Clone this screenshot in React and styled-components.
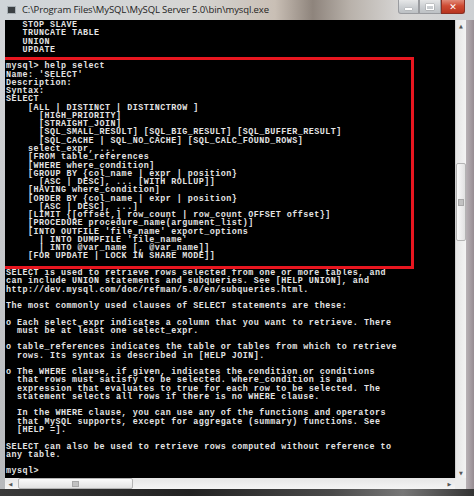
import React from "react";
import styled, { createGlobalStyle } from "styled-components";

const GlobalStyle = createGlobalStyle`
  html, body {
    margin: 0;
    padding: 0;
    background: #2a2a2a;
  }
`;

const Window = styled.div`
  width: 474px;
  height: 496px;
  display: flex;
  flex-direction: column;
  overflow: hidden;
  background: linear-gradient(90deg, #cfd4d9 0%, #d6d6d4 40%, #c9bfb5 58%, #8e847c 66%, #b9b2ab 74%, #d8d7d6 85%, #cdd0d3 100%);
`;

const TitleBar = styled.div`
  height: 20px;
  flex: none;
  display: flex;
  align-items: flex-start;
  padding-left: 7px;
`;

const AppIcon = styled.div`
  width: 9px;
  height: 8px;
  margin-top: 6px;
  margin-right: 6px;
  background: #3c4044;
  border: 1px solid #a9b0b6;
  box-sizing: border-box;
`;

const Title = styled.div`
  font-family: "Open Sans", "Liberation Sans", sans-serif;
  font-size: 9.5px;
  line-height: 20px;
  color: #1e1e1e;
  letter-spacing: -0.12px;
  white-space: nowrap;
`;

const Controls = styled.div`
  margin-left: auto;
  margin-right: 9px;
  display: flex;
  height: 14px;
`;

const CtrlButton = styled.div`
  width: ${(p) => p.$w}px;
  height: 14px;
  box-sizing: border-box;
  border: 1px solid ${(p) => (p.$close ? "#8a3024" : "#9a9ca0")};
  border-top: none;
  border-radius: ${(p) => p.$radius || "0"};
  background: ${(p) =>
    p.$close
      ? "linear-gradient(180deg, #e08a78 0%, #cf4b33 45%, #b7341f 100%)"
      : "linear-gradient(180deg, #e6e7e8 0%, #cdd0d3 50%, #bcc0c4 100%)"};
  display: flex;
  align-items: center;
  justify-content: center;
  color: #fff;
  font-family: "DejaVu Sans", sans-serif;
  font-weight: bold;
  font-size: 9px;
`;

const MinGlyph = styled.div`
  width: 7px;
  height: 2px;
  margin-top: 5px;
  background: #fff;
  box-shadow: 0 0 1px #555;
`;

const MaxGlyph = styled.div`
  width: 8px;
  height: 6px;
  box-sizing: border-box;
  border: 1px solid #fff;
  border-top-width: 2px;
  box-shadow: 0 0 1px #555;
`;

const Body = styled.div`
  height: 469px;
  flex: none;
  display: flex;
`;

const LeftFrame = styled.div`
  width: 5px;
  flex: none;
  background: linear-gradient(180deg, #d4d6d9, #b7b9bc);
`;

const RightFrame = styled.div`
  width: 8px;
  flex: none;
  background: linear-gradient(90deg, #b8b2b6, #978c92);
`;

const ConsoleColumn = styled.div`
  width: 461px;
  flex: none;
  display: flex;
  flex-direction: column;
`;

const ConsoleRow = styled.div`
  height: 458px;
  flex: none;
  display: flex;
`;

const Console = styled.div`
  width: 450px;
  flex: none;
  background: #000;
  padding: 1px 0 0 1px;
  box-sizing: border-box;
  overflow: hidden;
`;

const Line = styled.div`
  font-family: "Liberation Mono", "DejaVu Sans Mono", monospace;
  font-weight: bold;
  font-size: 8.4px;
  letter-spacing: 0.48px;
  line-height: 8.28px;
  height: 8.28px;
  color: #e4e4e4;
  white-space: pre;
`;

const Highlight = styled.div`
  position: relative;

  &::before {
    content: "";
    position: absolute;
    left: -6px;
    top: -5px;
    width: 414px;
    bottom: -8px;
    border: 3px solid #e8161f;
    box-sizing: border-box;
    pointer-events: none;
  }
`;

const VScroll = styled.div`
  width: 11px;
  flex: none;
  display: flex;
  flex-direction: column;
  background: linear-gradient(90deg, #e6e6e6, #f3f3f3);
  border-left: 1px solid #d0d0d0;
  box-sizing: border-box;
`;

const HScroll = styled.div`
  height: 11px;
  flex: none;
  display: flex;
  background: linear-gradient(180deg, #e6e6e6, #f4f4f4);
`;

const Arrow = styled.div`
  flex: none;
  width: ${(p) => (p.$h ? "11px" : "100%")};
  height: ${(p) => (p.$h ? "100%" : "11px")};
  display: flex;
  align-items: center;
  justify-content: center;
  font-size: 5px;
  color: #555;
  font-family: "DejaVu Sans", sans-serif;
`;

const Track = styled.div`
  flex: 1;
  display: flex;
  flex-direction: ${(p) => (p.$h ? "row" : "column")};
`;

const Spacer = styled.div`
  flex: none;
  ${(p) => (p.$h ? `width: ${p.$size}px;` : `height: ${p.$size}px;`)}
`;

const Thumb = styled.div`
  flex: none;
  ${(p) => (p.$h ? `width: ${p.$size}px;` : `height: ${p.$size}px;`)}
  border: 1px solid #b4b4b4;
  border-radius: 2px;
  box-sizing: border-box;
  background: ${(p) =>
    p.$h
      ? "linear-gradient(180deg, #fafafa, #e2e2e2)"
      : "linear-gradient(90deg, #fafafa, #e2e2e2)"};
  display: flex;
  align-items: center;
  justify-content: center;
`;

const Grip = styled.div`
  width: ${(p) => (p.$h ? "5px" : "4px")};
  height: ${(p) => (p.$h ? "4px" : "5px")};
  background: #c2c2c2;
  border: 1px solid #a8a8a8;
`;

const Corner = styled.div`
  width: 11px;
  flex: none;
  background: #ececec;
`;

const BottomFrame = styled.div`
  flex: 1;
  background: linear-gradient(90deg, #3a3a3a, #222 40%, #4a4a4a 70%, #777 85%, #333);
`;

const before = ["   STOP SLAVE", "   TRUNCATE TABLE", "   UNION", "   UPDATE", ""];

const helpBlock = [
  "mysql> help select",
  "Name: 'SELECT'",
  "Description:",
  "Syntax:",
  "SELECT",
  "    [ALL | DISTINCT | DISTINCTROW ]",
  "      [HIGH_PRIORITY]",
  "      [STRAIGHT_JOIN]",
  "      [SQL_SMALL_RESULT] [SQL_BIG_RESULT] [SQL_BUFFER_RESULT]",
  "      [SQL_CACHE | SQL_NO_CACHE] [SQL_CALC_FOUND_ROWS]",
  "    select_expr, ...",
  "    [FROM table_references",
  "    [WHERE where_condition]",
  "    [GROUP BY {col_name | expr | position}",
  "      [ASC | DESC], ... [WITH ROLLUP]]",
  "    [HAVING where_condition]",
  "    [ORDER BY {col_name | expr | position}",
  "      [ASC | DESC], ...]",
  "    [LIMIT {[offset,] row_count | row_count OFFSET offset}]",
  "    [PROCEDURE procedure_name(argument_list)]",
  "    [INTO OUTFILE 'file_name' export_options",
  "      | INTO DUMPFILE 'file_name'",
  "      | INTO @var_name [, @var_name]]",
  "    [FOR UPDATE | LOCK IN SHARE MODE]]",
];

const after = [
  "",
  "SELECT is used to retrieve rows selected from one or more tables, and",
  "can include UNION statements and subqueries. See [HELP UNION], and",
  "http://dev.mysql.com/doc/refman/5.0/en/subqueries.html.",
  "",
  "The most commonly used clauses of SELECT statements are these:",
  "",
  "o Each select_expr indicates a column that you want to retrieve. There",
  "  must be at least one select_expr.",
  "",
  "o table_references indicates the table or tables from which to retrieve",
  "  rows. Its syntax is described in [HELP JOIN].",
  "",
  "o The WHERE clause, if given, indicates the condition or conditions",
  "  that rows must satisfy to be selected. where_condition is an",
  "  expression that evaluates to true for each row to be selected. The",
  "  statement selects all rows if there is no WHERE clause.",
  "",
  "  In the WHERE clause, you can use any of the functions and operators",
  "  that MySQL supports, except for aggregate (summary) functions. See",
  "  [HELP =].",
  "",
  "SELECT can also be used to retrieve rows computed without reference to",
  "any table.",
  "",
  "mysql>",
];

const renderLines = (lines, prefix) =>
  lines.map((text, i) => <Line key={prefix + i}>{text}</Line>);

export default function App() {
  return (
    <>
      <GlobalStyle />
      <Window>
        <TitleBar>
          <AppIcon />
          <Title>C:\Program Files\MySQL\MySQL Server 5.0\bin\mysql.exe</Title>
          <Controls>
            <CtrlButton $w={21} $radius="0 0 0 3px">
              <MinGlyph />
            </CtrlButton>
            <CtrlButton $w={22}>
              <MaxGlyph />
            </CtrlButton>
            <CtrlButton $w={24} $close $radius="0 0 3px 0">
              ✕
            </CtrlButton>
          </Controls>
        </TitleBar>
        <Body>
          <LeftFrame />
          <ConsoleColumn>
            <ConsoleRow>
              <Console>
                {renderLines(before, "b")}
                <Highlight>{renderLines(helpBlock, "h")}</Highlight>
                {renderLines(after, "a")}
              </Console>
              <VScroll>
                <Arrow>▲</Arrow>
                <Track>
                  <Spacer $size={132} />
                  <Thumb $size={78}>
                    <Grip />
                  </Thumb>
                </Track>
                <Arrow>▼</Arrow>
              </VScroll>
            </ConsoleRow>
            <HScroll>
              <Arrow $h>◀</Arrow>
              <Track $h>
                <Spacer $h $size={2} />
                <Thumb $h $size={115}>
                  <Grip $h />
                </Thumb>
              </Track>
              <Arrow $h>▶</Arrow>
              <Corner />
            </HScroll>
          </ConsoleColumn>
          <RightFrame />
        </Body>
        <BottomFrame />
      </Window>
    </>
  );
}
